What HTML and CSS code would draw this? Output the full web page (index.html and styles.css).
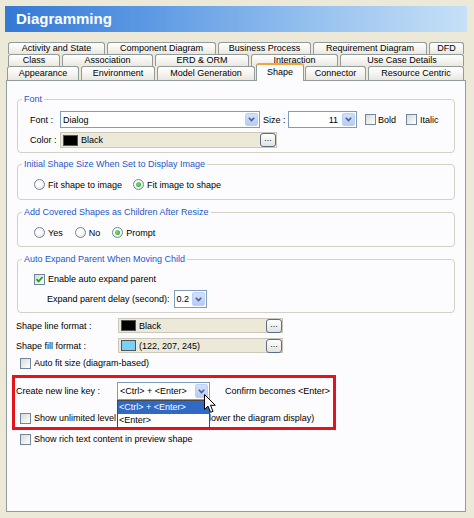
FILE: index.html
```html
<!DOCTYPE html>
<html>
<head>
<meta charset="utf-8">
<link rel="stylesheet" href="styles.css">
</head>
<body>
<div class="window">
  <div class="titlebar">Diagramming</div>
  <div class="tabs">
    <div class="tabrow r1">
      <span class="tab">Activity and State</span>
      <span class="tab">Component Diagram</span>
      <span class="tab">Business Process</span>
      <span class="tab">Requirement Diagram</span>
      <span class="tab">DFD</span>
    </div>
    <div class="tabrow r2">
      <span class="tab">Class</span>
      <span class="tab">Association</span>
      <span class="tab">ERD &amp; ORM</span>
      <span class="tab">Interaction</span>
      <span class="tab">Use Case Details</span>
    </div>
    <div class="tabrow r3">
      <span class="tab">Appearance</span>
      <span class="tab">Environment</span>
      <span class="tab">Model Generation</span>
      <span class="tab sel">Shape</span>
      <span class="tab">Connector</span>
      <span class="tab">Resource Centric</span>
    </div>
  </div>
  <div class="panel">
    <fieldset class="group">
      <legend>Font</legend>
      <div class="gbody g-font">
        <div class="row h17">
          <span class="lbl w30">Font :</span>
          <div class="combo combo-font">
            <span class="combo-text">Dialog</span>
            <span class="combo-btn"><svg width="7" height="5" viewBox="0 0 7 5"><path d="M0.8 0.8 L3.5 3.6 L6.2 0.8" fill="none" stroke="#4d6185" stroke-width="1.6"/></svg></span>
          </div>
          <span class="lbl size-lbl">Size :</span>
          <div class="combo combo-size">
            <span class="combo-text num">11</span>
            <span class="combo-btn"><svg width="7" height="5" viewBox="0 0 7 5"><path d="M0.8 0.8 L3.5 3.6 L6.2 0.8" fill="none" stroke="#4d6185" stroke-width="1.6"/></svg></span>
          </div>
          <span class="check bold-check"><span class="cb"></span><span>Bold</span></span>
          <span class="check italic-check"><span class="cb"></span><span>Italic</span></span>
        </div>
        <div class="row h16 gap4">
          <span class="lbl w30">Color :</span>
          <div class="field color-field">
            <span class="swatch black"></span>
            <span class="ftext">Black</span>
            <span class="dots">...</span>
          </div>
        </div>
      </div>
    </fieldset>

    <fieldset class="group mt5">
      <legend>Initial Shape Size When Set to Display Image</legend>
      <div class="gbody g-radio">
        <div class="row h13">
          <span class="opt"><span class="radio"></span><span>Fit shape to image</span></span>
          <span class="opt"><span class="radio on"></span><span>Fit image to shape</span></span>
        </div>
      </div>
    </fieldset>

    <fieldset class="group mt6">
      <legend>Add Covered Shapes as Children After Resize</legend>
      <div class="gbody g-radio g-yn">
        <div class="row h13">
          <span class="opt"><span class="radio"></span><span>Yes</span></span>
          <span class="opt"><span class="radio"></span><span>No</span></span>
          <span class="opt"><span class="radio on"></span><span>Prompt</span></span>
        </div>
      </div>
    </fieldset>

    <fieldset class="group mt6">
      <legend>Auto Expand Parent When Moving Child</legend>
      <div class="gbody g-expand">
        <div class="row h12">
          <span class="check"><span class="cb on"><svg width="9" height="9" viewBox="0 0 9 9"><path d="M1.5 4.2 L3.6 6.4 L7.6 2" fill="none" stroke="#21a121" stroke-width="1.8"/></svg></span><span>Enable auto expand parent</span></span>
        </div>
        <div class="row h18 delay-row">
          <span>Expand parent delay (second):</span>
          <div class="combo combo-delay">
            <span class="combo-text">0.2</span>
            <span class="combo-btn"><svg width="7" height="5" viewBox="0 0 7 5"><path d="M0.8 0.8 L3.5 3.6 L6.2 0.8" fill="none" stroke="#4d6185" stroke-width="1.6"/></svg></span>
          </div>
        </div>
      </div>
    </fieldset>

    <div class="frow first">
      <span class="lbl wlbl">Shape line format :</span>
      <div class="field shape-field">
        <span class="swatch black"></span>
        <span class="ftext">Black</span>
        <span class="dots">...</span>
      </div>
    </div>
    <div class="frow second">
      <span class="lbl wlbl">Shape fill format :</span>
      <div class="field shape-field">
        <span class="swatch fill"></span>
        <span class="ftext">(122, 207, 245)</span>
        <span class="dots">...</span>
      </div>
    </div>
    <div class="checkrow autofit">
      <span class="check"><span class="cb"></span><span>Auto fit size (diagram-based)</span></span>
    </div>

    <div class="redbox">
      <div class="row h18">
        <span class="lbl wkey">Create new line key :</span>
        <div class="combo combo-key">
          <span class="combo-text">&lt;Ctrl&gt; + &lt;Enter&gt;</span>
          <span class="combo-btn"><svg width="7" height="5" viewBox="0 0 7 5"><path d="M0.8 0.8 L3.5 3.6 L6.2 0.8" fill="none" stroke="#4d6185" stroke-width="1.6"/></svg></span>
          <div class="popup">
            <div class="item sel">&lt;Ctrl&gt; + &lt;Enter&gt;</div>
            <div class="item">&lt;Enter&gt;</div>
          </div>
          <svg class="cursor" width="13" height="20" viewBox="0 0 13 20"><path d="M0.5 0.5 L0.5 15.5 L4 12.2 L6.6 18.3 L9 17.3 L6.5 11.3 L11.3 11.3 Z" fill="#fff" stroke="#000" stroke-width="1" stroke-linejoin="round"/></svg>
        </div>
        <span class="confirm">Confirm becomes &lt;Enter&gt;</span>
      </div>
      <div class="row h12 unl-row">
        <span class="check"><span class="cb"></span><span class="nowrap">Show unlimited level in nested shapes text (lower the diagram display)</span></span>
      </div>
    </div>

    <div class="checkrow richtext">
      <span class="check"><span class="cb"></span><span>Show rich text content in preview shape</span></span>
    </div>
  </div>
</div>
</body>
</html>
```

FILE: styles.css
```css
* { box-sizing: border-box; }

body {
  margin: 0;
  background: #ece9d8;
  font-family: "Liberation Sans", Arial, sans-serif;
  font-size: 9px;
  color: #000;
}

.window {
  width: 474px;
  height: 518px;
  padding: 6px 7px 0 6px;
}

.titlebar {
  height: 26px;
  margin-left: -1px;
  padding-left: 11px;
  line-height: 26px;
  color: #fff;
  font-weight: bold;
  font-size: 15px;
  background: linear-gradient(90deg, #3479d6 0%, #5b98e3 30%, #93bfee 65%, #c7e0f7 100%);
}

/* ---------- tabs ---------- */
.tabs {
  margin-top: 10px;
  margin-right: 1px;
}

.tabrow {
  display: grid;
  column-gap: 2px;
  grid-template-rows: 12px;
  height: 12px;
}

.r1 { grid-template-columns: 97px 109px 93px 114px 35px; margin-left: 2px; }
.r2 { grid-template-columns: 52px 91px 94px 87px 124px; margin-left: 2px; }
.r3 {
  grid-template-columns: 72px 74px 98px 46px 61px 96px;
  grid-template-rows: 14px;
  height: 14px;
  margin-left: 1px;
}

.tab {
  border: 1px solid #919b9c;
  border-bottom: none;
  border-radius: 3px 3px 0 0;
  background: linear-gradient(#ffffff, #f4f3ee 55%, #e8e7df);
  text-align: center;
  white-space: nowrap;
  overflow: hidden;
  line-height: 11px;
  color: #000;
}

.r3 .tab { line-height: 13px; }

.tab.sel {
  position: relative;
  z-index: 1;
  align-self: start;
  height: 18px;
  margin: -3px -1px 0;
  background: #fcfcfe;
  border-top: 2px solid #f0a43c;
  line-height: 14px;
}

/* ---------- panel ---------- */
.panel {
  height: 432px;
  margin-right: 1px;
  border: 1px solid #919b9c;
  background: #fcfcfe;
  padding: 12px 10px 0 9px;
}

.group {
  margin: 0 0 0 1px;
  padding: 0;
  border: 1px solid #d3d1c4;
  border-radius: 4px;
  min-width: 0;
}

.group legend {
  margin-left: 4px;
  padding: 0 2px;
  line-height: 12px;
  color: #1f57c9;
}

.mt5 { margin-top: 5px; }
.mt6 { margin-top: 6px; }

.gbody { display: flex; flex-direction: column; }
.g-font { padding: 6px 0 4px 12px; }
.g-radio { padding: 8px 0 8px 16px; }
.g-yn { padding-bottom: 7px; }
.g-expand { padding: 8px 0 4px 16px; }

.row { display: flex; align-items: center; }
.h12 { height: 12px; }
.h13 { height: 13px; }
.h16 { height: 16px; }
.h17 { height: 17px; }
.h18 { height: 18px; }
.gap4 { margin-top: 4px; }

.lbl { white-space: nowrap; flex: none; }
.w30 { width: 30px; }
.size-lbl { width: 25px; margin-left: 3px; }
.wlbl { width: 102px; }
.wkey { width: 101px; }

/* combo boxes */
.combo {
  position: relative;
  display: flex;
  align-items: center;
  height: 100%;
  border: 1px solid #7f9db9;
  background: #fff;
  padding: 1px;
  flex: none;
}

.combo-text {
  flex: 1;
  padding-left: 1px;
  white-space: nowrap;
  color: #000;
}

.combo-text.num { text-align: right; padding-right: 4px; }

.combo-btn {
  width: 13px;
  height: 100%;
  display: flex;
  align-items: center;
  justify-content: center;
  border: 1px solid #bccff4;
  border-radius: 2px;
  background: linear-gradient(#d2e0fd, #b6cbf6);
  flex: none;
}

.combo-font { width: 200px; }
.combo-size { width: 69px; }
.combo-delay { width: 33px; margin-left: 4px; }
.combo-key { width: 93px; }

/* checks / radios */
.check, .opt {
  display: flex;
  align-items: center;
  white-space: nowrap;
}

.cb {
  width: 11px;
  height: 11px;
  margin-right: 3px;
  border: 1px solid #6f87a2;
  background: linear-gradient(135deg, #dadad2, #ffffff);
  display: flex;
  align-items: center;
  justify-content: center;
  flex: none;
}

.bold-check { margin-left: 8px; }
.bold-check .cb { margin-right: 2px; }
.italic-check { margin-left: 10px; }

.radio {
  width: 11px;
  height: 11px;
  margin-right: 3px;
  border-radius: 50%;
  border: 1px solid #6f87a2;
  background: radial-gradient(circle at 40% 40%, #ffffff 30%, #dcdcd3);
  display: flex;
  align-items: center;
  justify-content: center;
  flex: none;
}

.radio.on::after {
  content: "";
  width: 5px;
  height: 5px;
  border-radius: 50%;
  background: radial-gradient(circle at 40% 40%, #7ee07e, #21a121);
}

.g-radio .opt { margin-right: 11px; }
.g-yn .opt { margin-right: 12px; }

.delay-row { margin-top: 5px; padding-left: 13px; }

/* fields */
.field {
  display: flex;
  align-items: center;
  height: 100%;
  border: 1px solid #cbc8b9;
  background: #ece9d8;
  padding: 0 0 0 2px;
  flex: none;
}

.color-field { width: 217px; }
.shape-field { width: 165px; }

.swatch {
  width: 15px;
  height: 11px;
  border: 1px solid #555;
  flex: none;
}

.swatch.black { background: #000; }
.swatch.fill { background: rgb(122, 207, 245); }

.ftext { margin-left: 3px; white-space: nowrap; flex: 1; }

.dots {
  width: 16px;
  height: 14px;
  border: 1px solid #5a6e8c;
  border-radius: 3px;
  background: linear-gradient(#ffffff, #e3e2da);
  text-align: center;
  line-height: 9px;
  font-size: 9px;
  color: #222;
  flex: none;
}

.frow {
  display: flex;
  align-items: center;
  height: 15px;
}

.frow.first { margin-top: 5px; }
.frow.second { margin-top: 5px; }

.checkrow {
  display: flex;
  align-items: center;
  height: 12px;
  padding-left: 4px;
}

.autofit { margin-top: 4px; }
.richtext { margin-top: 3px; }

/* red annotation box */
.redbox {
  width: 324px;
  height: 55px;
  margin-top: 6px;
  margin-left: -4px;
  border: 3px solid #e3141b;
  padding: 4px 0 3px 1px;
}

.confirm { margin-left: 15px; white-space: nowrap; }

.unl-row { margin-top: 12px; padding-left: 4px; }

.nowrap { white-space: nowrap; }

.popup {
  position: absolute;
  left: -1px;
  top: 17px;
  width: 93px;
  border: 1px solid #4a4a4a;
  background: #fff;
  z-index: 2;
}

.popup .item {
  height: 13px;
  line-height: 13px;
  padding-left: 1px;
  white-space: nowrap;
  color: #000;
}

.popup .item.sel {
  background: #316ac5;
  color: #fff;
}

.cursor {
  position: absolute;
  left: 86px;
  top: 11px;
  z-index: 3;
}
```
